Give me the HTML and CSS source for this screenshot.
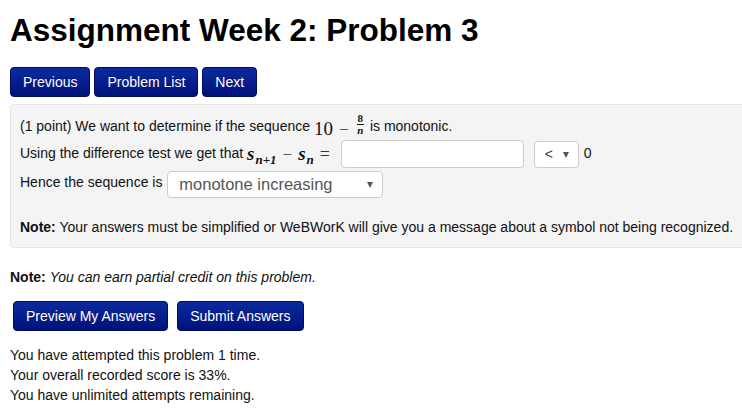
FILE: index.html
```html
<!DOCTYPE html>
<html>

<head>
    <meta name="viewport" content="width=device-width, initial-scale=1.0">
    <title>Assignment Week 2: Problem 3</title>
    <link rel="stylesheet" href="styles.css">
</head>

<body>
    <h2 class="set-title">Assignment Week 2: Problem 3</h2>
    <div class="nav-row">
        <a class="wb-btn" href="#">Previous</a>
        <a class="wb-btn" href="#">Problem List</a>
        <a class="wb-btn" href="#">Next</a>
    </div>

    <div class="problem-well">
        <div class="pline pline-first">
            (1 point) We want to determine if the sequence
            <span class="math"><span class="mn">10</span><span class="mo">&minus;</span><span class="frac"><span class="num">8</span><span class="den">n</span></span></span>
            is monotonic.
        </div>
        <div class="pline pline-input">
            Using the difference test we get that
            <span class="math"><span class="mi">s</span><sub class="msub">n+1</sub><span class="mo">&minus;</span><span class="mi">s</span><sub class="msub">n</sub><span class="mo mo-eq">=</span></span>
            <input class="ans-input" type="text"><span class="sel-wrap sel-small"><select class="ans-select">
                    <option>&lt;</option>
                    <option>&gt;</option>
                </select></span>
            0
        </div>
        <div class="pline pline-select">
            Hence the sequence is
            <span class="sel-wrap sel-wide"><select class="ans-select ans-select-big">
                    <option>monotone increasing</option>
                    <option>monotone decreasing</option>
                    <option>not monotonic</option>
                </select></span>
        </div>
        <div class="pline pline-blank"></div>
        <div class="pline">
            <b>Note:</b> Your answers must be simplified or WeBWorK will give you a message about a symbol not being recognized.
        </div>
    </div>

    <p class="credit-note"><b>Note:</b> <i>You can earn partial credit on this problem.</i></p>

    <div class="submit-row">
        <a class="wb-btn" href="#">Preview My Answers</a>
        <a class="wb-btn" href="#">Submit Answers</a>
    </div>

    <div class="score-info">
        You have attempted this problem 1 time.<br>
        Your overall recorded score is 33%.<br>
        You have unlimited attempts remaining.
    </div>
</body>

</html>
```

FILE: styles.css
```css
html {
    font-family: "Liberation Sans", Arial, sans-serif;
    font-size: 14px;
    line-height: 20px;
    color: #111;
}

body {
    margin: 0;
    padding: 0 0 0 10px;
    overflow: hidden;
}

.set-title {
    font-size: 31.5px;
    line-height: 40px;
    font-weight: bold;
    color: #000;
    margin: 10px 0 17px;
}

.nav-row,
.submit-row {
    display: flex;
    gap: 4px;
}

.submit-row {
    gap: 9px;
    margin: 14px 0 0 3px;
}

.wb-btn {
    display: inline-block;
    padding: 4px 12px;
    font-size: 14px;
    line-height: 20px;
    color: white;
    text-decoration: none;
    background-color: #041a8a;
    background-image: linear-gradient(to bottom, #0b2a9e, #00127a);
    border: 1px solid #000c63;
    border-radius: 4px;
    text-shadow: 0 -1px 0 rgba(0, 0, 0, 0.25);
}

.problem-well {
    margin-top: 7px;
    margin-right: -20px;
    padding: 9px 9px 10px;
    background-color: #f4f4f4;
    border: 1px solid #e3e3e3;
    border-radius: 4px;
}

.pline {
    height: 20px;
    line-height: 20px;
    white-space: nowrap;
}

.pline-first {
    height: 25px;
    line-height: 25px;
}

.pline-input {
    height: 28px;
    line-height: 28px;
}

.pline-select {
    height: 30px;
    line-height: 30px;
}

.math {
    display: inline-block;
    font-family: "Liberation Serif", "DejaVu Serif", serif;
    font-size: 18px;
    line-height: 20px;
    vertical-align: middle;
}

.mn {
    font-size: 19px;
}

.mo {
    margin: 0 6px;
    font-size: 17px;
    color: #333;
}

.mo-eq {
    margin: 0 0 0 6px;
    font-size: 18px;
}

.mi {
    font-style: italic;
    font-weight: bold;
    font-size: 19px;
}

.msub {
    font-style: italic;
    font-weight: bold;
    font-size: 13px;
    line-height: 0;
    vertical-align: -4px;
    margin-left: 1px;
}

.frac {
    display: inline-block;
    text-align: center;
    font-size: 11px;
    line-height: 9px;
    font-weight: bold;
    vertical-align: 1px;
    margin: 0 2px;
}

.frac .num {
    display: block;
    border-bottom: 1px solid #111;
    padding: 0 1px 1px;
}

.frac .den {
    display: block;
    font-style: italic;
    padding-top: 1px;
}

.ans-input {
    width: 183px;
    height: 28px;
    box-sizing: border-box;
    margin: 0 0 0 7px;
    vertical-align: middle;
    border: 1px solid #ccc;
    border-radius: 4px;
    background: white;
    font-size: 14px;
}

.sel-wrap {
    position: relative;
    display: inline-block;
    vertical-align: middle;
    line-height: 0;
}

.sel-wrap::after {
    content: "";
    position: absolute;
    top: 50%;
    right: 10px;
    margin-top: -2px;
    border-left: 3.5px solid transparent;
    border-right: 3.5px solid transparent;
    border-top: 6px solid #555;
    pointer-events: none;
}

.sel-small {
    margin: 0 1px 0 10px;
}

.ans-select {
    appearance: none;
    -webkit-appearance: none;
    width: 45px;
    height: 27px;
    margin: 0;
    padding: 0 0 0 10px;
    border: 1px solid #ccc;
    border-radius: 4px;
    background: white;
    font-family: "Liberation Sans", Arial, sans-serif;
    font-size: 14px;
    color: #444;
}

.sel-wide {
    margin: 2px 0 0 1px;
}

.ans-select-big {
    width: 216px;
    padding-left: 11px;
    font-size: 16.5px;
    color: #555;
}

.credit-note {
    margin: 19px 0 0;
}

.score-info {
    margin-top: 14px;
}
```
